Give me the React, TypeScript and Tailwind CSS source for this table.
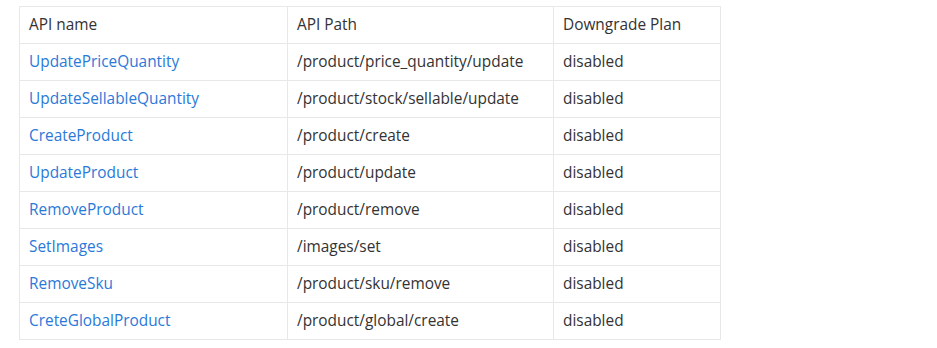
import React from 'react';

interface ApiRow {
  name: string;
  path: string;
  plan: string;
}

const rows: ApiRow[] = [
  { name: 'UpdatePriceQuantity', path: '/product/price_quantity/update', plan: 'disabled' },
  { name: 'UpdateSellableQuantity', path: '/product/stock/sellable/update', plan: 'disabled' },
  { name: 'CreateProduct', path: '/product/create', plan: 'disabled' },
  { name: 'UpdateProduct', path: '/product/update', plan: 'disabled' },
  { name: 'RemoveProduct', path: '/product/remove', plan: 'disabled' },
  { name: 'SetImages', path: '/images/set', plan: 'disabled' },
  { name: 'RemoveSku', path: '/product/sku/remove', plan: 'disabled' },
  { name: 'CreteGlobalProduct', path: '/product/global/create', plan: 'disabled' },
];

const cell = 'h-[37px] px-[9px] py-0 border border-[#e8e8e8] align-middle';

const App: React.FC = () => {
  return (
    <div className="bg-white w-[937px] h-[348px] pt-[6px] pl-[19px] font-['Segoe_UI','Open_Sans',sans-serif] text-[15.4px] text-[#333]">
      <table className="border-collapse text-left table-fixed w-[701px]">
        <colgroup>
          <col className="w-[268px]" />
          <col className="w-[266px]" />
          <col className="w-[167px]" />
        </colgroup>
        <thead>
          <tr>
            <th className={`${cell} font-normal`}>API name</th>
            <th className={`${cell} font-normal`}>API Path</th>
            <th className={`${cell} font-normal`}>Downgrade Plan</th>
          </tr>
        </thead>
        <tbody>
          {rows.map(r => (
            <tr key={r.name}>
              <td className={cell}>
                <a href="#" className="text-[#2a79d9]">{r.name}</a>
              </td>
              <td className={cell}>{r.path}</td>
              <td className={cell}>{r.plan}</td>
            </tr>
          ))}
        </tbody>
      </table>
    </div>
  );
};

export default App;
